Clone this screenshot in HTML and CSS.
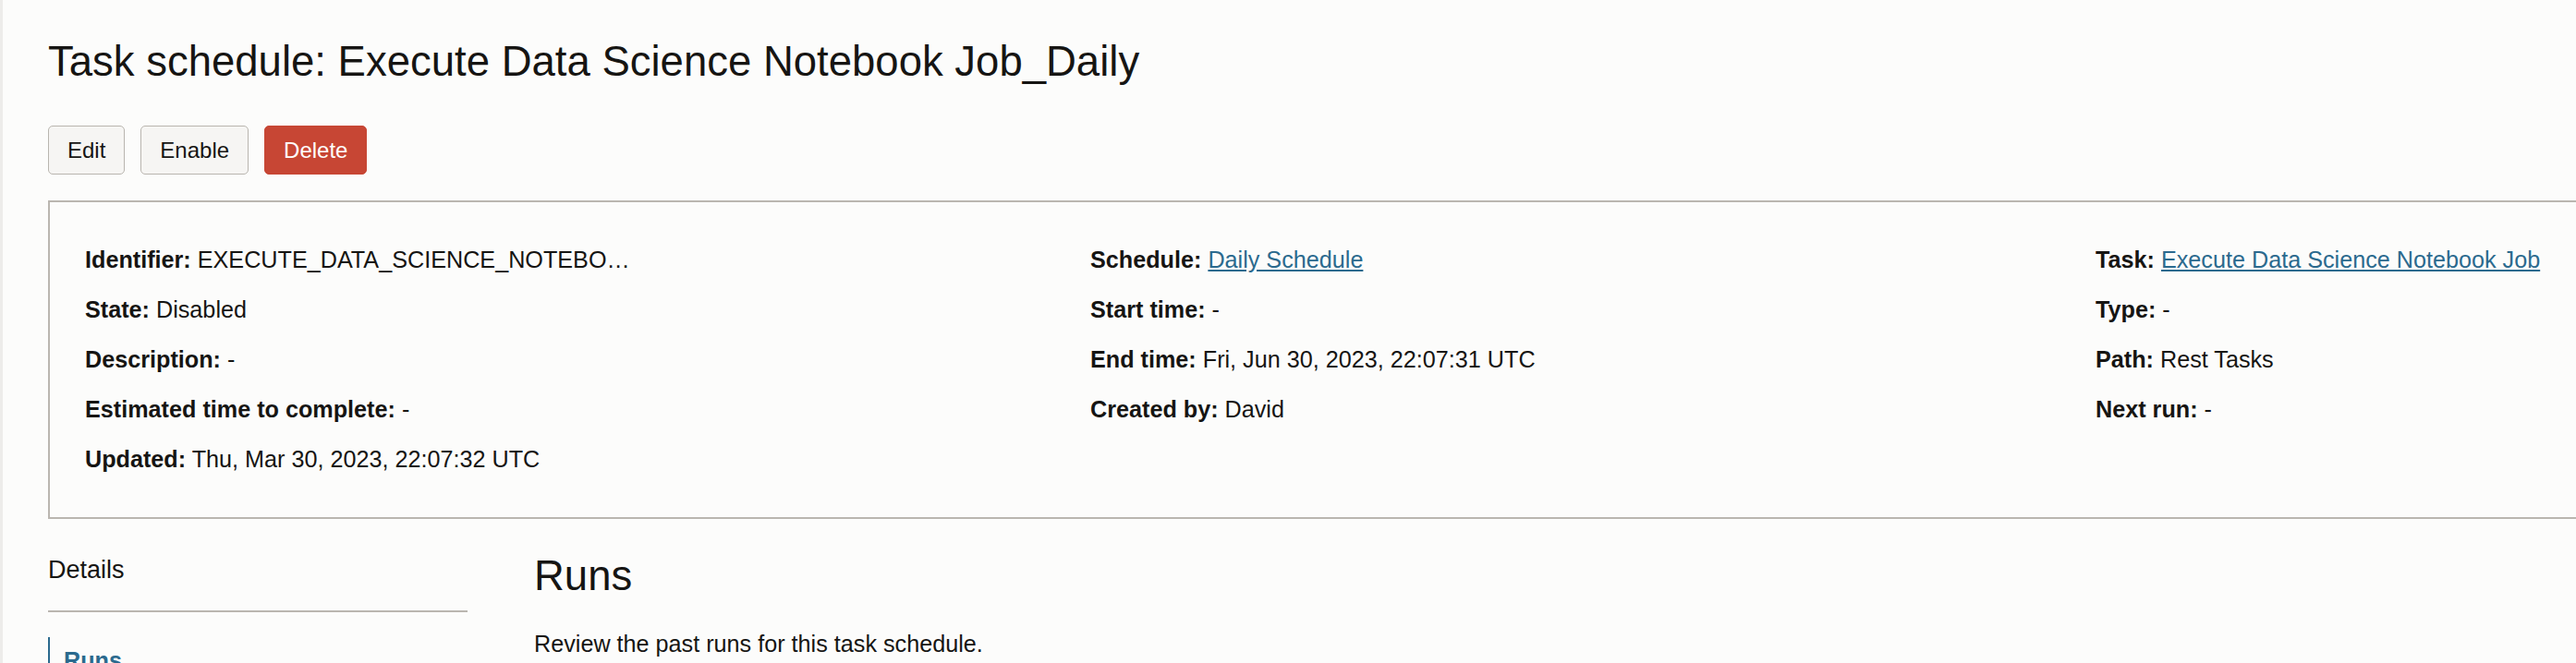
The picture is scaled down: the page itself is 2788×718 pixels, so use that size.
FILE: index.html
```html
<!DOCTYPE html>
<html lang="en">
<head>
  <meta charset="UTF-8">
  <meta name="viewport" content="width=device-width, initial-scale=1.0">
  <title>Task schedule</title>
  <link rel="stylesheet" href="styles.css">
</head>
<body>
  <div class="page">
    <h1 class="title">Task schedule: Execute Data Science Notebook Job_Daily</h1>

    <div class="actions">
      <button class="btn">Edit</button>
      <button class="btn">Enable</button>
      <button class="btn btn-danger">Delete</button>
    </div>

    <div class="summary">
      <div class="col">
        <div class="field"><span class="label">Identifier:</span> EXECUTE_DATA_SCIENCE_NOTEBO…</div>
        <div class="field"><span class="label">State:</span> Disabled</div>
        <div class="field"><span class="label">Description:</span> -</div>
        <div class="field"><span class="label">Estimated time to complete:</span> -</div>
        <div class="field"><span class="label">Updated:</span> Thu, Mar 30, 2023, 22:07:32 UTC</div>
      </div>
      <div class="col">
        <div class="field"><span class="label">Schedule:</span> <a href="#">Daily Schedule</a></div>
        <div class="field"><span class="label">Start time:</span> -</div>
        <div class="field"><span class="label">End time:</span> Fri, Jun 30, 2023, 22:07:31 UTC</div>
        <div class="field"><span class="label">Created by:</span> David</div>
      </div>
      <div class="col">
        <div class="field"><span class="label">Task:</span> <a href="#">Execute Data Science Notebook Job</a></div>
        <div class="field"><span class="label">Type:</span> -</div>
        <div class="field"><span class="label">Path:</span> Rest Tasks</div>
        <div class="field"><span class="label">Next run:</span> -</div>
      </div>
    </div>

    <div class="content">
      <nav class="sidenav">
        <div class="sidenav-title">Details</div>
        <ul class="sidenav-list">
          <li class="sidenav-item active">Runs</li>
        </ul>
      </nav>
      <main class="main">
        <h2 class="section-title">Runs</h2>
        <p class="section-text">Review the past runs for this task schedule.</p>
      </main>
    </div>
  </div>
</body>
</html>
```

FILE: styles.css
```css
body{
  margin: 0;
  background-color: #fcfcfb;
  color: #161513;
  font-family: 'Liberation Sans', Arial, sans-serif;
  font-size: 25.2px;
  overflow: hidden;
}

.page{
  border-left: 3px solid #edecea;
  padding: 41px 0 0 49px;
  min-height: 100vh;
  box-sizing: border-box;
}

.title{
  margin: 0;
  font-size: 45.5px;
  font-weight: normal;
  line-height: 52px;
}

.actions{
  display: flex;
  gap: 17px;
  margin-top: 43px;
}

.btn{
  height: 53px;
  padding: 0 20px;
  border: 1px solid #b9b5af;
  border-radius: 5px;
  background-color: #f6f5f3;
  color: #161513;
  font-family: inherit;
  font-size: 24px;
}

.btn-danger{
  border-color: #c74634;
  background-color: #c74634;
  color: #fff;
}

.summary{
  display: grid;
  grid-template-columns: repeat(3, 1088px);
  width: max-content;
  margin-top: 28px;
  padding: 47px 38px 48px;
  border: 2px solid #bab6b0;
}

.col{
  display: flex;
  flex-direction: column;
  gap: 24px;
}

.field{
  line-height: 30px;
  white-space: nowrap;
}

.label{
  font-weight: bold;
}

a{
  color: #2b6a8e;
}

.content{
  display: flex;
  gap: 72px;
  margin-top: 36px;
}

.sidenav{
  width: 454px;
  flex-shrink: 0;
}

.sidenav-title{
  margin-top: 3px;
  padding-bottom: 28px;
  border-bottom: 2px solid #bab6b0;
  font-size: 27px;
  line-height: 32px;
}

.sidenav-list{
  list-style: none;
  margin: 27px 0 0;
  padding: 0;
}

.sidenav-item{
  padding: 10px 0 10px 15px;
  border-left: 2px solid #2b6a8e;
  line-height: 30px;
}

.sidenav-item.active{
  color: #2b6a8e;
  font-weight: bold;
}

.section-title{
  margin: 0;
  font-size: 45.5px;
  font-weight: normal;
  line-height: 52px;
}

.section-text{
  margin: 32px 0 0;
  line-height: 30px;
}
```
